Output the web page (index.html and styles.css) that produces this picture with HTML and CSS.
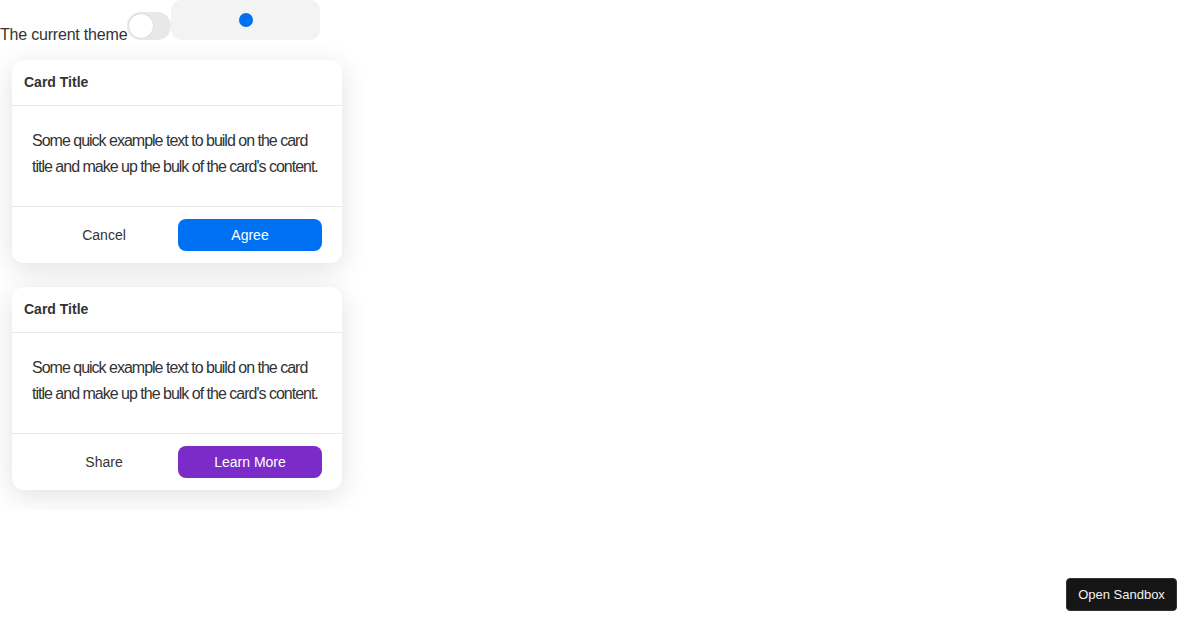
FILE: index.html
```html
<!DOCTYPE html>
<html lang="en">
<head>
  <meta charset="UTF-8">
  <meta name="viewport" content="width=device-width, initial-scale=1.0">
  <title>Cards</title>
  <link rel="stylesheet" href="styles.css">
</head>
<body>

<div class="theme-row">
  <span class="theme-label">The current theme</span>
  <span class="toggle"><span class="knob"></span></span>
  <div class="theme-box"><span class="dot"></span></div>
</div>

<main class="cards">
  <div class="card">
    <div class="card-header">Card Title</div>
    <div class="card-body">
      Some quick example text to build on the card title and make up the bulk of the card's content.
    </div>
    <div class="card-footer">
      <button class="btn btn-plain">Cancel</button>
      <button class="btn btn-blue">Agree</button>
    </div>
  </div>

  <div class="card">
    <div class="card-header">Card Title</div>
    <div class="card-body">
      Some quick example text to build on the card title and make up the bulk of the card's content.
    </div>
    <div class="card-footer">
      <button class="btn btn-plain">Share</button>
      <button class="btn btn-purple">Learn More</button>
    </div>
  </div>
</main>

<button class="sandbox">Open Sandbox</button>

</body>
</html>
```

FILE: styles.css
```css
body {
  font-family: "Liberation Sans", Arial, sans-serif;
  color: #333;
  background: #fff;
  margin: 0;
  padding: 0;
}
.theme-row {
  display: flex;
  align-items: flex-end;
  height: 40px;
}
.theme-label {
  font-size: 16px;
  line-height: 18px;
  letter-spacing: -0.2px;
  margin-bottom: -4px;
}
.toggle {
  display: inline-block;
  width: 44px;
  height: 28px;
  background: #e8e8e8;
  border-radius: 14px;
  padding: 2px;
  box-sizing: border-box;
}
.knob {
  display: block;
  width: 24px;
  height: 24px;
  background: white;
  border-radius: 50%;
  box-shadow: 0 0 1px rgba(0,0,0,0.25);
}
.theme-box {
  width: 149px;
  height: 40px;
  background: #f3f3f3;
  border-radius: 10px;
  display: flex;
  align-items: center;
  justify-content: center;
}
.dot {
  width: 14px;
  height: 14px;
  border-radius: 50%;
  background: #0070f3;
}
.cards {
  display: flex;
  flex-direction: column;
  gap: 24px;
  padding: 20px 12px;
}
.card {
  width: 330px;
  background: white;
  border-radius: 12px;
  box-shadow: 0 6px 28px rgba(0,0,0,0.12);
}
.card-header {
  font-size: 14px;
  font-weight: bold;
  padding: 0 12px;
  height: 45px;
  line-height: 45px;
  border-bottom: 1px solid #e8e8e8;
}
.card-body {
  font-size: 16px;
  line-height: 26px;
  letter-spacing: -1px;
  padding: 22px 20px 26px;
  border-bottom: 1px solid #e8e8e8;
}
.card-footer {
  display: flex;
  gap: 2px;
  padding: 12px 20px;
}
.btn {
  flex: 1;
  height: 32px;
  border: none;
  border-radius: 8px;
  font-family: "Liberation Sans", Arial, sans-serif;
  font-size: 14px;
  cursor: pointer;
}
.btn-plain {
  background: none;
  color: #333;
}
.btn-blue {
  background: #0070f3;
  color: white;
}
.btn-purple {
  background: #7b2bc8;
  color: white;
}
.sandbox {
  position: fixed;
  right: 23px;
  bottom: 19px;
  width: 111px;
  height: 33px;
  background: #151515;
  color: #f2f2f2;
  border: 1px solid #333;
  border-radius: 4px;
  font-family: "Liberation Sans", Arial, sans-serif;
  font-size: 13px;
  cursor: pointer;
}
```
